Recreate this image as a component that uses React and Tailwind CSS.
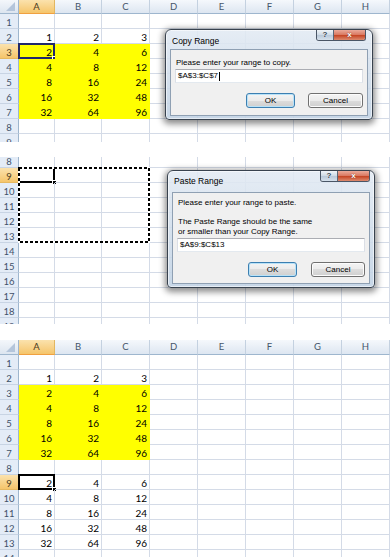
import React from "react";

const COLW = ["w-[36px]", "w-[47px]", "w-[48px]", "w-[48px]", "w-[48px]", "w-[48px]", "w-[48px]", "w-[48px]"];
const LETTERS = ["A", "B", "C", "D", "E", "F", "G", "H"];

const BASE = { 2: [1, 2, 3], 3: [2, 4, 6], 4: [4, 8, 12], 5: [8, 16, 24], 6: [16, 32, 48], 7: [32, 64, 96] };
const COPIED = { 9: [2, 4, 6], 10: [4, 8, 12], 11: [8, 16, 24], 12: [16, 32, 48], 13: [32, 64, 96] };

function ColHeader({ tall }) {
  return (
    <div className={`flex ${tall ? "h-[15px]" : "h-[14px]"}`}>
      <div className="relative w-[19px] shrink-0 border-r border-b border-[#9eb6ce] bg-[linear-gradient(#f4f7fb,#dce5f0)]">
        <svg className="absolute left-0 bottom-0" width="18" height="13" viewBox="0 0 18 13">
          <polygon points="15,2 15,11 6,11" fill="#b4c5db" />
        </svg>
      </div>
      {LETTERS.map((l, i) => (
        <div
          key={l}
          className={`${COLW[i]} shrink-0 flex items-center justify-center border-r border-b text-[9.5px] leading-none ${
            i === 0
              ? "bg-[linear-gradient(#fbe2ad,#f5c56b)] border-r-[#e2b660] border-b-[#f0a040] text-[#4a3b1e]"
              : "bg-[linear-gradient(#f5f8fc,#dde6f1)] border-r-[#c4d1e0] border-b-[#9eb6ce] text-[#46566b]"
          }`}
        >
          {l}
        </div>
      ))}
    </div>
  );
}

function Row({ n, vals, yellow, activeRow, overlay }) {
  return (
    <div className="flex h-[15px]">
      <div
        className={`w-[19px] shrink-0 border-r border-b border-r-[#9eb6ce] text-center text-[9.5px] leading-[15px] pt-[1px] ${
          activeRow ? "bg-[linear-gradient(#fbe2ad,#f5c56b)] border-b-[#e6b860] text-[#4a3b1e]" : "bg-[#e4ecf7] border-b-[#c8d4e4] text-[#3f5169]"
        }`}
      >
        {n}
      </div>
      {LETTERS.map((l, i) => {
        const v = vals && i < 3 ? vals[i] : null;
        const y = yellow && i < 3;
        return (
          <div
            key={l}
            className={`${COLW[i]} shrink-0 relative border-r border-b text-right pr-[2px] text-[10px] leading-[15px] pt-[1px] text-black ${
              y ? "bg-[#ffff00] border-[#ffff00]" : "border-[#d4dbe7]"
            }`}
          >
            {v}
            {i === 0 && overlay}
          </div>
        );
      })}
    </div>
  );
}

function SelBox({ color }) {
  return (
    <div className={`absolute left-[-1px] top-[-1px] w-[37px] h-[16px] border-2 ${color === "navy" ? "border-[#22286a]" : "border-black"}`}>
      <div className={`absolute right-[-4px] bottom-[-4px] w-[5px] h-[5px] border border-white ${color === "navy" ? "bg-[#22286a]" : "bg-black"}`} />
    </div>
  );
}

function CaptionButtons({ pos }) {
  return (
    <div className={`absolute top-0 ${pos} flex h-[11px] rounded-b-[3px] border border-t-0 border-[#4a5666] overflow-hidden`}>
      <div className="w-[17px] flex items-center justify-center border-r border-[#5a6777] bg-[linear-gradient(#f0f4f8,#cdd9e5_50%,#b7c7d8_50%,#d6e1ec)] text-[8px] font-bold leading-none text-[#34414f] [text-shadow:0_0_1px_#ffffff]">
        ?
      </div>
      <div className="w-[31px] flex items-center justify-center bg-[linear-gradient(#ebaa9a,#d8765e_50%,#c4401f_50%,#dc8a6e)] text-[8px] font-bold leading-none text-white [text-shadow:0_0_1px_#5a1a0a]">
        x
      </div>
    </div>
  );
}

function Btn({ children, def, w }) {
  return (
    <div
      className={`${w} h-[15px] rounded-[3px] border flex items-center justify-center text-[8px] leading-none text-black bg-[linear-gradient(#f4f4f4_0%,#ebebeb_50%,#dddddd_50%,#cfcfcf_100%)] ${
        def ? "border-[#3c7fb1] shadow-[inset_0_0_0_1px_#b8e2f8]" : "border-[#707070] shadow-[inset_0_0_0_1px_#fcfcfc]"
      }`}
    >
      {children}
    </div>
  );
}

function Frame({ pos, title, titleCls, capPos, children }) {
  return (
    <div
      className={`absolute ${pos} z-10 flex flex-col rounded-t-[6px] rounded-b-[4px] border border-[#38424e] bg-[linear-gradient(rgba(226,234,243,0.88),rgba(193,210,228,0.9))] shadow-[inset_0_0_0_1px_rgba(255,255,255,0.55),0_2px_6px_2px_rgba(0,0,0,0.45)] font-['Liberation_Sans',Arial,sans-serif]`}
    >
      <div className={`${titleCls} pl-[6px] text-[8.5px] leading-[13px] text-black`}>{title}</div>
      <CaptionButtons pos={capPos} />
      {children}
    </div>
  );
}

function CopyDialog() {
  return (
    <Frame pos="left-[165px] top-[29px] w-[208px] h-[91px]" title="Copy Range" titleCls="h-[19px] pt-[5px]" capPos="right-[6px]">
      <div className="mx-[4px] mb-[3px] flex-1 border border-[#8fa0b3] bg-[#f0f0f0] px-[4px] pt-[8px]">
        <div className="text-[8px] leading-[10px] text-black pl-[1px]">Please enter your range to copy.</div>
        <div className="mt-[1px] h-[14px] flex items-center border border-[#abadb3] border-x-[#dbdfe6] border-b-[#e3e9ef] bg-white pl-[2px] text-[8px] leading-none text-black">
          $A$3:$C$7<span className="ml-[1px] inline-block w-[1px] h-[9px] bg-black" />
        </div>
        <div className="mt-[10px] flex justify-end gap-[13px]">
          <Btn def w="w-[49px]">OK</Btn>
          <Btn w="w-[55px]">Cancel</Btn>
        </div>
      </div>
    </Frame>
  );
}

function PasteDialog() {
  return (
    <Frame pos="left-[167px] top-[13px] w-[208px] h-[118px]" title="Paste Range" titleCls="h-[21px] pt-[4px]" capPos="right-[4px]">
      <div className="mx-[4px] mb-[3px] flex-1 border border-[#8fa0b3] bg-[#f0f0f0] px-[4px] pt-[5px]">
        <div className="text-[8px] leading-[10px] text-black pl-[1px]">Please enter your range to paste.</div>
        <div className="mt-[9px] text-[8px] leading-[9.5px] text-black pl-[1px]">
          The Paste Range should be the same
          <br />
          or smaller than your Copy Range.
        </div>
        <div className="mt-[2px] h-[14px] flex items-center border border-[#abadb3] border-x-[#dbdfe6] border-b-[#e3e9ef] bg-white pl-[2px] text-[8px] leading-none text-black">
          $A$9:$C$13
        </div>
        <div className="mt-[10px] flex justify-end gap-[14px]">
          <Btn def w="w-[49px]">OK</Btn>
          <Btn w="w-[54px]">Cancel</Btn>
        </div>
      </div>
    </Frame>
  );
}

export default function App() {
  const top = [1, 2, 3, 4, 5, 6, 7, 8, 9];
  const mid = [8, 9, 10, 11, 12, 13, 14, 15, 16, 17, 18, 19];
  const bot = [1, 2, 3, 4, 5, 6, 7, 8, 9, 10, 11, 12, 13, 14];
  return (
    <div className="w-[390px] h-[560px] overflow-hidden bg-white font-['Lato',sans-serif]">
      <section className="relative h-[142px] overflow-hidden">
        <ColHeader />
        {top.map((n) => (
          <Row
            key={n}
            n={n}
            vals={BASE[n]}
            yellow={n >= 3 && n <= 7}
            activeRow={n === 3}
            overlay={n === 3 ? <SelBox color="navy" /> : null}
          />
        ))}
        <CopyDialog />
      </section>
      <div className="h-[15px]" />
      <section className="relative h-[167px] overflow-hidden">
        <div className="relative -mt-[4px]">
          {mid.map((n) => (
            <Row key={n} n={n} activeRow={n === 9} overlay={n === 9 ? <SelBox color="black" /> : null} />
          ))}
          <svg className="absolute left-[18px] top-[14px]" width="132" height="76" viewBox="0 0 132 76">
            <rect x="1" y="1" width="130" height="74" fill="none" stroke="#ffffff" strokeWidth="2" />
            <rect x="1" y="1" width="130" height="74" fill="none" stroke="#000000" strokeWidth="2" strokeDasharray="3 2" />
          </svg>
        </div>
        <PasteDialog />
      </section>
      <div className="h-[16px]" />
      <section className="relative h-[217px] overflow-hidden">
        <ColHeader tall />
        {bot.map((n) => (
          <Row
            key={n}
            n={n}
            vals={BASE[n] || COPIED[n]}
            yellow={n >= 3 && n <= 7}
            activeRow={n === 9}
            overlay={n === 9 ? <SelBox color="black" /> : null}
          />
        ))}
      </section>
    </div>
  );
}
